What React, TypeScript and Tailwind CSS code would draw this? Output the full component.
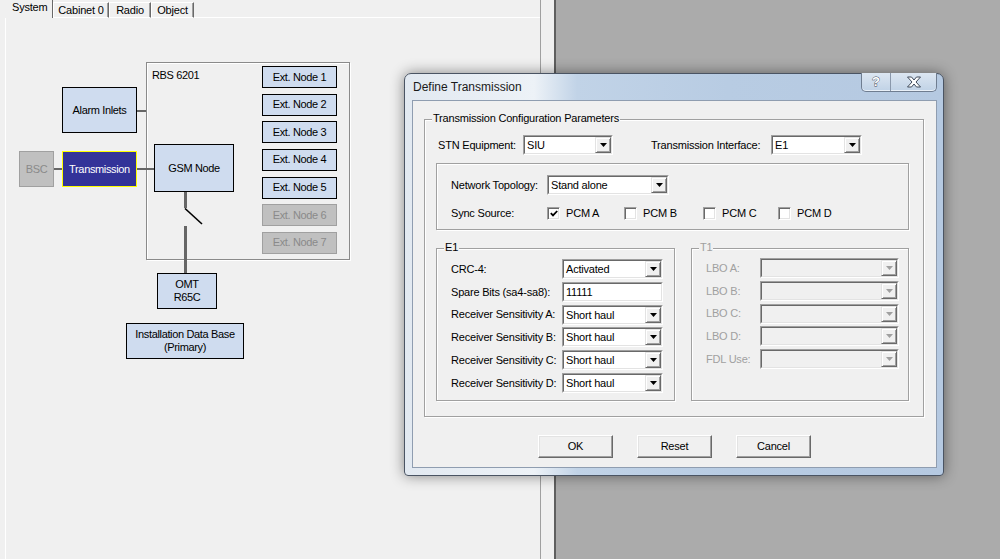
import React from "react";

// ── Classic Win32 controls ──────────────────────────────────────────────────

function Combo({
  value = "",
  w,
  disabled = false,
}: {
  value?: string;
  w: string;
  disabled?: boolean;
}) {
  return (
    <div
      className={`${w} h-[20px] shrink-0 border border-t-[#a0a0a0] border-l-[#a0a0a0] border-b-white border-r-white`}
    >
      <div
        className={`flex h-full items-stretch border border-t-[#696969] border-l-[#696969] border-b-[#e3e3e3] border-r-[#e3e3e3] ${
          disabled ? "bg-[#f0f0f0]" : "bg-white"
        }`}
      >
        <span className="flex-1 truncate pl-[2px] leading-[16px] text-black">{value}</span>
        <span className="flex w-[16px] items-center justify-center border border-t-[#e3e3e3] border-l-[#e3e3e3] border-b-[#696969] border-r-[#696969] bg-[#f0f0f0] shadow-[inset_1px_1px_0_#fff,inset_-1px_-1px_0_#a0a0a0]">
          <svg width="7" height="4" viewBox="0 0 7 4">
            <path d="M0 0h7L3.5 4z" fill={disabled ? "#a0a0a0" : "#000"} />
          </svg>
        </span>
      </div>
    </div>
  );
}

function TextBox({ value, w }: { value: string; w: string }) {
  return (
    <div
      className={`${w} h-[20px] shrink-0 border border-t-[#a0a0a0] border-l-[#a0a0a0] border-b-white border-r-white`}
    >
      <div className="h-full border border-t-[#696969] border-l-[#696969] border-b-[#e3e3e3] border-r-[#e3e3e3] bg-white pl-[2px] leading-[16px]">
        {value}
      </div>
    </div>
  );
}

function Check({ checked = false }: { checked?: boolean }) {
  return (
    <span className="flex h-[13px] w-[13px] shrink-0 items-center justify-center border border-t-[#a0a0a0] border-l-[#a0a0a0] border-b-white border-r-white bg-white shadow-[inset_1px_1px_0_#696969,inset_-1px_-1px_0_#e3e3e3]">
      {checked ? (
        <svg width="8" height="7" viewBox="0 0 8 7">
          <polyline points="0.8,3.2 3,5.4 7.2,1" fill="none" stroke="#000" strokeWidth="1.8" />
        </svg>
      ) : null}
    </span>
  );
}

function Btn({ label }: { label: string }) {
  return (
    <button
      type="button"
      className="h-[23px] w-[75px] border border-t-white border-l-white border-b-[#696969] border-r-[#696969] bg-[#f0f0f0] text-[11px] text-black shadow-[inset_-1px_-1px_0_#a0a0a0,inset_1px_1px_0_#e3e3e3]"
    >
      {label}
    </button>
  );
}

function Group({
  label,
  className,
  disabled = false,
  children,
}: {
  label: string;
  className: string;
  disabled?: boolean;
  children?: React.ReactNode;
}) {
  return (
    <div
      className={`relative shrink-0 border border-[#a0a0a0] shadow-[inset_1px_1px_0_#fff,1px_1px_0_#fff] ${className}`}
    >
      {label ? (
        <span
          className={`absolute -top-[8px] left-[7px] bg-[#f0f0f0] px-[1px] leading-[13px] ${
            disabled ? "text-[#a0a0a0]" : "text-black"
          }`}
        >
          {label}
        </span>
      ) : null}
      {children}
    </div>
  );
}

// ── Diagram ─────────────────────────────────────────────────────────────────

type Tone = "blue" | "dim" | "active";

const TONES: Record<Tone, string> = {
  blue: "bg-[#cfdcef] border-black text-black",
  dim: "bg-[#c0c0c0] border-[#a0a0a0] text-[#8a8a8a]",
  active: "bg-[#333399] border-[#ffff00] text-white",
};

function Node({
  className,
  tone = "blue",
  children,
}: {
  className: string;
  tone?: Tone;
  children: React.ReactNode;
}) {
  return (
    <div
      className={`flex flex-col items-center justify-center border text-center leading-[13px] ${TONES[tone]} ${className}`}
    >
      {children}
    </div>
  );
}

function Diagram() {
  return (
    <div className="relative flex-1 text-[11px] tracking-[-0.35px]">
      {/* RBS frame */}
      <div className="absolute left-[140px] top-[44px] h-[198px] w-[204px] border border-[#8a8a8a] pl-[5px] pt-[6px] leading-[13px] shadow-[1px_1px_0_#fff,inset_1px_1px_0_#fff]">
        RBS 6201
      </div>

      {/* Ext. nodes */}
      <div className="absolute left-[256px] top-[48px] flex flex-col gap-[5.67px]">
        {[1, 2, 3, 4, 5, 6, 7].map((n) => (
          <Node key={n} className="h-[22px] w-[75px]" tone={n > 5 ? "dim" : "blue"}>
            Ext. Node {n}
          </Node>
        ))}
      </div>

      <Node className="absolute left-[56px] top-[69px] h-[46px] w-[75px]">Alarm Inlets</Node>
      <div className="absolute left-[131px] top-[92px] h-[2px] w-[9px] bg-[#666]" />

      <Node className="absolute left-[13px] top-[133px] h-[36px] w-[35px]" tone="dim">
        BSC
      </Node>
      <div className="absolute left-[48px] top-[150px] h-[2px] w-[8px] bg-[#666]" />
      <Node className="absolute left-[56px] top-[133px] h-[36px] w-[75px]" tone="active">
        Transmission
      </Node>
      <div className="absolute left-[131px] top-[150px] h-[2px] w-[17px] bg-[#666]" />

      <Node className="absolute left-[148px] top-[126px] h-[48px] w-[80px]">GSM Node</Node>

      {/* link to OMT with the open switch */}
      <div className="absolute left-[178px] top-[174px] h-[16px] w-[3px] bg-[#666]" />
      <svg className="absolute left-[178px] top-[190px]" width="19" height="17" viewBox="0 0 19 17">
        <line x1="1" y1="0.5" x2="18" y2="16" stroke="#000" strokeWidth="1.6" />
      </svg>
      <div className="absolute left-[178px] top-[208px] h-[47px] w-[3px] bg-[#666]" />

      <Node className="absolute left-[151px] top-[255px] h-[36px] w-[60px]">
        <span>OMT</span>
        <span>R65C</span>
      </Node>
      <Node className="absolute left-[120px] top-[305px] h-[36px] w-[118px]">
        <span>Installation Data Base</span>
        <span>(Primary)</span>
      </Node>
    </div>
  );
}

// ── Tabs ────────────────────────────────────────────────────────────────────

function Tab({ w, label }: { w: string; label: string }) {
  return (
    <div
      className={`${w} flex h-[16px] items-center justify-center border border-t-white border-l-white border-b-white border-r-[#696969] shadow-[inset_-1px_0_0_#a0a0a0]`}
    >
      {label}
    </div>
  );
}

// ── Dialog ──────────────────────────────────────────────────────────────────

const E1_ROWS: { label: string; value: string; text?: boolean }[] = [
  { label: "CRC-4:", value: "Activated" },
  { label: "Spare Bits (sa4-sa8):", value: "11111", text: true },
  { label: "Receiver Sensitivity A:", value: "Short haul" },
  { label: "Receiver Sensitivity B:", value: "Short haul" },
  { label: "Receiver Sensitivity C:", value: "Short haul" },
  { label: "Receiver Sensitivity D:", value: "Short haul" },
];

const T1_ROWS = ["LBO A:", "LBO B:", "LBO C:", "LBO D:", "FDL Use:"];

function DefineTransmission() {
  return (
    <div className="absolute left-[404px] top-[73px] flex h-[403px] w-[540px] flex-col rounded-t-[7px] rounded-b-[4px] border border-[#4a5463] bg-[linear-gradient(90deg,#e2e9f1_0%,#edf2f7_24%,#c1d3e7_32%,#b8cce3_60%,#b5c9e1_100%)] shadow-[0_0_14px_rgba(0,0,0,0.45)]">
      {/* Title bar */}
      <div className="relative flex h-[26px] items-center pl-[8px] text-[12px] text-[#1a1a1a]">
        Define Transmission
        <div className="absolute right-[6px] top-[-1px] flex h-[19px] overflow-hidden rounded-b-[5px] border border-t-0 border-[#6f7d90] bg-[linear-gradient(180deg,#dce6f1,#c0d2e6)] shadow-[inset_0_-1px_0_#e9f0f8]">
          <div className="flex w-[28px] items-center justify-center text-[13px] font-bold text-white [-webkit-text-stroke:0.8px_#3a4656] [paint-order:stroke_fill]">
            ?
          </div>
          <div className="flex w-[46px] items-center justify-center border-l border-[#8a98ab]">
            <svg width="16" height="12" viewBox="0 0 16 12">
              <path
                d="M1.5 1h4l2.5 3 2.5-3h4l-4.5 5 4.5 5h-4l-2.5-3-2.5 3h-4l4.5-5z"
                fill="#fff"
                stroke="#3f4a5a"
                strokeWidth="1"
                strokeLinejoin="round"
              />
            </svg>
          </div>
        </div>
      </div>

      {/* Client area */}
      <div className="ml-[7px] flex h-[368px] w-[525px] flex-col border border-[#8f9db0] bg-[#f0f0f0] text-[11px] tracking-[-0.2px] text-black">
        <Group label="Transmission Configuration Parameters" className="ml-[11px] mt-[18px] h-[298px] w-[500px]">
          {/* STN / Interface */}
          <div className="mt-[15px] flex items-center pl-[13px]">
            <span className="w-[85px] shrink-0">STN Equipment:</span>
            <Combo w="w-[90px]" value="SIU" />
            <span className="ml-[38px] w-[120px] shrink-0">Transmission Interface:</span>
            <Combo w="w-[91px]" value="E1" />
          </div>

          {/* Topology & sync */}
          <Group label="" className="ml-[11px] mt-[8px] h-[67px] w-[473px]">
            <div className="mt-[11px] flex items-center pl-[14px]">
              <span className="w-[96px] shrink-0">Network Topology:</span>
              <Combo w="w-[122px]" value="Stand alone" />
            </div>
            <div className="mt-[11px] flex h-[14px] items-center pl-[14px]">
              <span className="w-[96px] shrink-0">Sync Source:</span>
              <div className="flex w-[77px] items-center gap-[6px]">
                <Check checked />
                PCM A
              </div>
              <div className="flex w-[79px] items-center gap-[6px]">
                <Check />
                PCM B
              </div>
              <div className="flex w-[75px] items-center gap-[6px]">
                <Check />
                PCM C
              </div>
              <div className="flex items-center gap-[6px]">
                <Check />
                PCM D
              </div>
            </div>
          </Group>

          {/* E1 / T1 */}
          <div className="ml-[11px] mt-[18px] flex gap-[16px]">
            <Group label="E1" className="h-[153px] w-[239px]">
              <div className="mt-[10px] flex flex-col gap-[2.8px] pl-[14px]">
                {E1_ROWS.map((r) => (
                  <div key={r.label} className="flex h-[20px] items-center">
                    <span className="w-[111px] shrink-0">{r.label}</span>
                    {r.text ? <TextBox w="w-[101px]" value={r.value} /> : <Combo w="w-[101px]" value={r.value} />}
                  </div>
                ))}
              </div>
            </Group>
            <Group label="T1" disabled className="h-[153px] w-[218px]">
              <div className="mt-[9px] flex flex-col gap-[2.8px] pl-[14px] text-[#a0a0a0]">
                {T1_ROWS.map((l) => (
                  <div key={l} className="flex h-[20px] items-center">
                    <span className="w-[54px] shrink-0">{l}</span>
                    <Combo w="w-[139px]" disabled />
                  </div>
                ))}
              </div>
            </Group>
          </div>
        </Group>

        <div className="mt-[18px] flex justify-center gap-[24px]">
          <Btn label="OK" />
          <Btn label="Reset" />
          <Btn label="Cancel" />
        </div>
      </div>
    </div>
  );
}

// ── Page ────────────────────────────────────────────────────────────────────

export default function App() {
  return (
    <div className="relative flex h-[559px] w-[1000px] overflow-hidden bg-[#f0f0f0] font-['Liberation_Sans',Arial,sans-serif] text-[11px] text-black">
      {/* Tabbed system view */}
      <div className="flex w-[540px] flex-col">
        <div className="flex h-[18px] items-end tracking-[-0.2px]">
          <div className="flex h-[18px] w-[53px] items-center border-r border-[#696969] pb-[3px] pl-[12px]">
            System
          </div>
          <Tab w="w-[56px]" label="Cabinet 0" />
          <Tab w="w-[42px]" label="Radio" />
          <Tab w="w-[43px]" label="Object" />
          <div className="h-[1px] flex-1 bg-white" />
        </div>
        <div className="ml-[5px] flex flex-1 border-l border-white">
          <Diagram />
        </div>
      </div>

      {/* Splitter */}
      <div className="w-[14px] border-l border-[#a0a0a0]" />

      {/* Empty workspace */}
      <div className="flex-1 border-l-2 border-[#5f5f5f] bg-[#ababab]" />

      <DefineTransmission />
    </div>
  );
}
